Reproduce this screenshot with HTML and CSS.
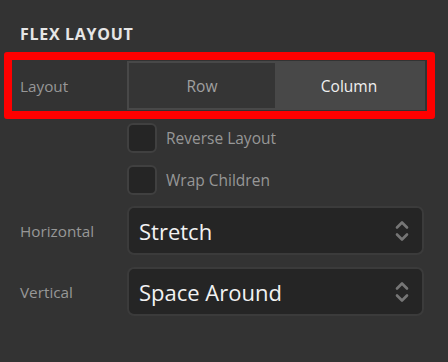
FILE: index.html
```html
<!DOCTYPE html>
<html>
<head>
<meta charset="utf-8">
<link rel="stylesheet" href="styles.css">
</head>
<body>
<div class="panel">
  <h2 class="title">FLEX LAYOUT</h2>
  <div class="highlight">
    <div class="row layout-row">
      <span class="label">Layout</span>
      <div class="segmented">
        <button class="seg seg-off">Row</button>
        <button class="seg seg-on">Column</button>
      </div>
    </div>
  </div>
  <div class="check-row first">
    <span class="box"></span><span class="check-label">Reverse Layout</span>
  </div>
  <div class="check-row">
    <span class="box"></span><span class="check-label">Wrap Children</span>
  </div>
  <div class="field first-field">
    <span class="label">Horizontal</span>
    <div class="select">
      <span class="value">Stretch</span>
      <svg class="arrows" width="14" height="22" viewBox="0 0 14 22"><path d="M2 7.5 L7 2.5 L12 7.5 M2 14.5 L7 19.5 L12 14.5" fill="none" stroke="#767676" stroke-width="2.6" stroke-linecap="round" stroke-linejoin="round"/></svg>
    </div>
  </div>
  <div class="field">
    <span class="label">Vertical</span>
    <div class="select">
      <span class="value">Space Around</span>
      <svg class="arrows" width="14" height="22" viewBox="0 0 14 22"><path d="M2 7.5 L7 2.5 L12 7.5 M2 14.5 L7 19.5 L12 14.5" fill="none" stroke="#767676" stroke-width="2.6" stroke-linecap="round" stroke-linejoin="round"/></svg>
    </div>
  </div>
</div>
</body>
</html>
```
FILE: styles.css
```css
html, body {
  margin: 0;
  padding: 0;
  background: #333333;
  width: 448px;
  height: 362px;
  overflow: hidden;
  font-family: "Open Sans", "Noto Sans", sans-serif;
}
.panel {
  padding-top: 24px;
}
.title {
  margin: 0 0 8px 20px;
  font-size: 16px;
  line-height: 20px;
  font-weight: 700;
  letter-spacing: 0.7px;
  color: #e6e6e6;
}
.highlight {
  margin-left: 4px;
  width: 431px;
  box-sizing: border-box;
  border: 8px solid #ff0000;
  border-radius: 3px;
}
.row {
  display: flex;
  align-items: center;
}
.layout-row {
  padding: 1px 2px 1px 8px;
  background: #333333;
}
.label {
  width: 107px;
  flex: none;
  font-size: 15.3px;
  color: #979797;
}
.segmented {
  display: flex;
  width: 298px;
  height: 49px;
  box-sizing: border-box;
  padding: 2px;
  background: #484848;
}
.seg {
  flex: 1;
  border: 0;
  margin: 0;
  padding: 0;
  font-family: inherit;
  font-size: 15.5px;
}
.seg-off {
  flex: 0 0 146px;
  background: #353535;
  color: #a0a0a0;
}
.seg-on {
  background: transparent;
  color: #f0f0f0;
}
.check-row {
  display: flex;
  align-items: center;
  margin-left: 127px;
  margin-top: 12px;
  height: 30px;
}
.check-row.first {
  margin-top: 4px;
}
.box {
  width: 30px;
  height: 30px;
  box-sizing: border-box;
  border: 2px solid #404040;
  background: #252525;
  border-radius: 6px;
  margin-right: 9px;
}
.check-label {
  font-size: 15.5px;
  color: #979797;
}
.field {
  display: flex;
  align-items: center;
  padding-left: 20px;
  margin-top: 12px;
}
.field.first-field {
  margin-top: 11px;
}
.select {
  display: flex;
  align-items: center;
  justify-content: space-between;
  width: 297px;
  height: 49px;
  box-sizing: border-box;
  border: 2px solid #3b3b3b;
  border-radius: 7px;
  background: #252525;
  padding: 0 13px 0 10px;
}
.value {
  font-size: 22px;
  color: #f2f2f2;
}
.arrows {
  display: block;
}
```
